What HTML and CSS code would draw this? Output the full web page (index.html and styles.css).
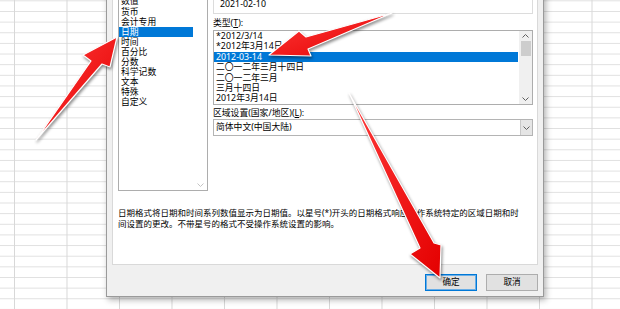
FILE: index.html
```html
<!DOCTYPE html>
<html lang="zh-CN">
<head>
  <meta charset="UTF-8">
  <title>设置单元格格式</title>
  <link rel="stylesheet" href="styles.css">
</head>
<body>
  <div class="sheet">
    <div class="dialog">
      <div class="page">
        <div class="page-body">
          <div class="category">
            <ul class="list cat-list">
              <li>常规</li>
              <li>数值</li>
              <li>货币</li>
              <li>会计专用</li>
              <li class="selected">日期</li>
              <li>时间</li>
              <li>百分比</li>
              <li>分数</li>
              <li>科学记数</li>
              <li>文本</li>
              <li>特殊</li>
              <li>自定义</li>
            </ul>
            <div class="scrollbar faint">
              <svg class="chev" width="7" height="4" viewBox="0 0 7 4"><polyline points="0.5,0.5 3.5,3.5 6.5,0.5"/></svg>
            </div>
          </div>

          <div class="right">
            <div class="sample">2021-02-10</div>
            <div class="label">类型(<u>T</u>):</div>
            <div class="types">
              <ul class="list type-list">
                <li>*2012/3/14</li>
                <li>*2012年3月14日</li>
                <li class="selected">2012-03-14</li>
                <li>二〇一二年三月十四日</li>
                <li>二〇一二年三月</li>
                <li>三月十四日</li>
                <li>2012年3月14日</li>
              </ul>
              <div class="scrollbar">
                <svg class="chev" width="7" height="4" viewBox="0 0 7 4"><polyline points="0.5,3.5 3.5,0.5 6.5,3.5"/></svg>
                <div class="thumb"></div>
                <svg class="chev down" width="7" height="4" viewBox="0 0 7 4"><polyline points="0.5,0.5 3.5,3.5 6.5,0.5"/></svg>
              </div>
            </div>
            <div class="label second">区域设置(国家/地区)(<u>L</u>):</div>
            <div class="select">
              <span class="select-text">简体中文(中国大陆)</span>
              <span class="select-btn">
                <svg class="chev" width="7" height="4" viewBox="0 0 7 4"><polyline points="0.5,0.5 3.5,3.5 6.5,0.5"/></svg>
              </span>
            </div>
          </div>
        </div>

        <p class="desc">日期格式将日期和时间系列数值显示为日期值。以星号(*)开头的日期格式响应操作系统特定的区域日期和时<br>间设置的更改。不带星号的格式不受操作系统设置的影响。</p>
      </div>

      <div class="buttons">
        <button class="btn primary">确定</button>
        <button class="btn">取消</button>
      </div>
    </div>

    <!-- red annotation arrows drawn over the screenshot -->
    <svg class="arrows" width="620" height="309" viewBox="0 0 620 309">
      <defs>
        <linearGradient id="red" x1="0" y1="0" x2="1" y2="1">
          <stop offset="0" stop-color="#ff3a3a"/>
          <stop offset="1" stop-color="#e40000"/>
        </linearGradient>
      </defs>
      <polygon class="arrow" points="36,140 91,61 83,55 117,37 110,67 102,64"/>
      <polygon class="arrow" points="392,13 306,37 299,31 269,55 311,56 308,49"/>
      <polygon class="arrow" points="349,93 434,243 441,245 440,278 410,254 420,248"/>
    </svg>
  </div>
</body>
</html>
```

FILE: styles.css
```css
html, body {
  margin: 0;
}

body {
  width: 620px;
  height: 309px;
  overflow: hidden;
  font-family: "Noto Sans", "Noto Sans CJK SC", sans-serif;
  font-size: 8.8px;
  color: #000;
}

.sheet {
  position: relative;
  width: 620px;
  height: 309px;
  overflow: hidden;
  background-color: #ffffff;
  background-image:
    linear-gradient(to right, #d8d8d8 1px, transparent 1px),
    linear-gradient(to bottom, #e0e0e0 1px, transparent 1px);
  background-size: 52.5px 100%, 100% 10.65px;
  background-position: 14px 0, 0 0.35px;
}

.dialog {
  position: absolute;
  left: 106px;
  top: -30px;
  width: 438px;
  box-sizing: border-box;
  padding: 4px 5px 5px;
  background: #f0f0f0;
  border: 1px solid #9a9a9a;
  box-shadow: 2px 3px 6px rgba(0, 0, 0, 0.3);
}

.page {
  height: 290px;
  box-sizing: border-box;
  padding: 0 4px 0 5px;
  background: #ffffff;
  border: 1px solid #d9d9d9;
}

.page-body {
  display: flex;
  gap: 5px;
}

.list {
  list-style: none;
  margin: 0;
  padding: 0;
  flex: 1;
}

.list li {
  padding-left: 2px;
  white-space: nowrap;
}

.list li.selected {
  background: #0078d7;
  color: #ffffff;
}

.category {
  width: 90px;
  height: 205.6px;
  margin-top: 9.4px;
  box-sizing: border-box;
  border: 1px solid #adadad;
  display: flex;
}

.cat-list li {
  line-height: 10.1px;
  height: 10.1px;
}

.scrollbar {
  width: 13px;
  display: flex;
  flex-direction: column;
  align-items: center;
  background: #f0f0f0;
}

.scrollbar.faint {
  width: 14px;
  background: #ffffff;
  justify-content: flex-end;
  padding-bottom: 3px;
  box-sizing: border-box;
}

.chev {
  display: block;
  fill: none;
  stroke: #606060;
  stroke-width: 1;
}

.scrollbar.faint .chev {
  stroke: #c4c4c4;
}

.scrollbar .chev {
  margin-top: 3px;
}

.scrollbar .chev.down {
  margin-top: auto;
  margin-bottom: 3px;
}

.scrollbar.faint .chev {
  margin: 0;
}

.thumb {
  width: 10px;
  height: 15px;
  margin-top: 3px;
  background: #cdcdcd;
}

.right {
  width: 320px;
}

.sample {
  height: 38px;
  box-sizing: border-box;
  padding: 22px 0 0 6px;
  line-height: 11px;
  border: 1px solid #dcdcdc;
}

.label {
  margin-top: 3px;
  line-height: 12px;
}

.label.second {
  margin-top: 2px;
}

.types {
  margin-top: 1px;
  height: 74.8px;
  box-sizing: border-box;
  border: 1px solid #adadad;
  display: flex;
}

.type-list li {
  line-height: 10.4px;
  height: 10.4px;
  margin-right: 1px;
}

.select {
  margin-top: 0.5px;
  height: 17px;
  box-sizing: border-box;
  border: 1px solid #b4b4b4;
  display: flex;
  align-items: stretch;
}

.select-text {
  flex: 1;
  padding-left: 2px;
  line-height: 15px;
}

.select-btn {
  width: 11px;
  margin: 0;
  background: #e5e5e5;
  border-left: 1px solid #c8c8c8;
  display: flex;
  align-items: center;
  justify-content: center;
}

.desc {
  margin: 17px 0 0;
  font-size: 8.5px;
  line-height: 10.7px;
  white-space: nowrap;
}

.buttons {
  display: flex;
  justify-content: flex-end;
  gap: 9px;
  margin-top: 9px;
}

.btn {
  width: 52px;
  height: 17px;
  padding: 0;
  font: inherit;
  font-size: 8.6px;
  line-height: 15px;
  color: #000;
  background: #e1e1e1;
  border: 1px solid #adadad;
}

.btn.primary {
  border-color: #0078d7;
  box-shadow: inset 0 0 0 1px #6aaee6;
}

.arrows {
  position: absolute;
  left: 0;
  top: 0;
  pointer-events: none;
}

.arrow {
  fill: url(#red);
  stroke: #ffffff;
  stroke-width: 1.2;
  stroke-linejoin: round;
  filter: drop-shadow(1px 2px 1.5px rgba(0, 0, 0, 0.45));
}
```
